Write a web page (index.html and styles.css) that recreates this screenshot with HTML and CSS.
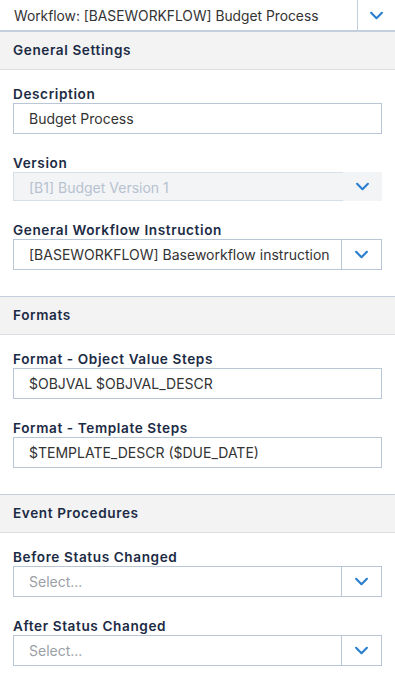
FILE: index.html
```html
<!DOCTYPE html>
<html>
<head>
<meta charset="utf-8">
<link rel="stylesheet" href="styles.css">
</head>
<body>
<div class="topbar">
  <div class="topbar-text">Workflow: [BASEWORKFLOW] Budget Process</div>
  <div class="topbar-btn"><svg class="chev" viewBox="0 0 16 10"><path d="M2 2 L8 8 L14 2"/></svg></div>
</div>

<div class="section-head">General Settings</div>
<div class="section-body">
  <div class="field">
    <div class="label">Description</div>
    <div class="input">Budget Process</div>
  </div>
  <div class="field">
    <div class="label">Version</div>
    <div class="select disabled">
      <div class="select-val">[B1] Budget Version 1</div>
      <div class="select-btn"><svg class="chev" viewBox="0 0 16 10"><path d="M2 2 L8 8 L14 2"/></svg></div>
    </div>
  </div>
  <div class="field">
    <div class="label">General Workflow Instruction</div>
    <div class="select">
      <div class="select-val">[BASEWORKFLOW] Baseworkflow instruction</div>
      <div class="select-btn"><svg class="chev" viewBox="0 0 16 10"><path d="M2 2 L8 8 L14 2"/></svg></div>
    </div>
  </div>
</div>

<div class="section-head bordered">Formats</div>
<div class="section-body">
  <div class="field">
    <div class="label">Format - Object Value Steps</div>
    <div class="input">$OBJVAL $OBJVAL_DESCR</div>
  </div>
  <div class="field">
    <div class="label">Format - Template Steps</div>
    <div class="input">$TEMPLATE_DESCR ($DUE_DATE)</div>
  </div>
</div>

<div class="section-head bordered">Event Procedures</div>
<div class="section-body">
  <div class="field">
    <div class="label">Before Status Changed</div>
    <div class="select">
      <div class="select-val placeholder">Select...</div>
      <div class="select-btn"><svg class="chev" viewBox="0 0 16 10"><path d="M2 2 L8 8 L14 2"/></svg></div>
    </div>
  </div>
  <div class="field">
    <div class="label">After Status Changed</div>
    <div class="select">
      <div class="select-val placeholder">Select...</div>
      <div class="select-btn"><svg class="chev" viewBox="0 0 16 10"><path d="M2 2 L8 8 L14 2"/></svg></div>
    </div>
  </div>
</div>
</body>
</html>
```
FILE: styles.css
```css
html, body {
  margin: 0;
  padding: 0;
  background: #ffffff;
  font-family: Inter, "Noto Sans", sans-serif;
  color: #333333;
}

.topbar {
  display: flex;
  height: 30px;
  border-bottom: 2px solid #c3cfdc;
}
.topbar-text {
  flex: 1;
  padding-left: 14px;
  font-size: 13.8px;
  line-height: 32px;
  color: #333333;
  white-space: nowrap;
  overflow: hidden;
}
.topbar-btn {
  width: 37px;
  border-left: 1px solid #c3cfdc;
  display: flex;
  align-items: center;
  justify-content: center;
}

.chev {
  width: 15px;
  height: 9px;
  fill: none;
  stroke: #2b7fcf;
  stroke-width: 2.4;
  stroke-linecap: round;
  stroke-linejoin: round;
}

.section-head {
  background: #f3f3f3;
  height: 37px;
  line-height: 37px;
  padding-left: 13px;
  font-size: 13.6px;
  font-weight: 600;
  color: #1c2b45;
  letter-spacing: 0.6px;
  border-bottom: 1px solid #dadde2;
}
.section-head.bordered {
  border-top: 1px solid #c3cfdc;
}

.section-body {
  padding: 16px 13px 26px 13px;
  display: flex;
  flex-direction: column;
  gap: 21px;
}

.label {
  font-size: 13.6px;
  font-weight: 600;
  color: #1c2b45;
  letter-spacing: 0.6px;
  line-height: 17px;
}

.input {
  height: 29px;
  border: 1px solid #b9c6d6;
  padding-left: 15px;
  font-size: 14px;
  line-height: 29px;
  color: #333333;
}

.select {
  display: flex;
  height: 29px;
  border: 1px solid #b9c6d6;
}
.select-val {
  flex: 1;
  padding-left: 15px;
  font-size: 14px;
  line-height: 29px;
  color: #333333;
  white-space: nowrap;
  overflow: hidden;
}
.select-val.placeholder {
  color: #9aa0a6;
}
.select-btn {
  width: 39px;
  border-left: 1px solid #b9c6d6;
  display: flex;
  align-items: center;
  justify-content: center;
}

.select.disabled {
  border: none;
  background: #f3f4f6;
}
.select.disabled .select-val {
  border: 1px solid #d6dee8;
  border-right: none;
  color: #b6c2d0;
}
.select.disabled .select-btn {
  border-left: none;
}
```
